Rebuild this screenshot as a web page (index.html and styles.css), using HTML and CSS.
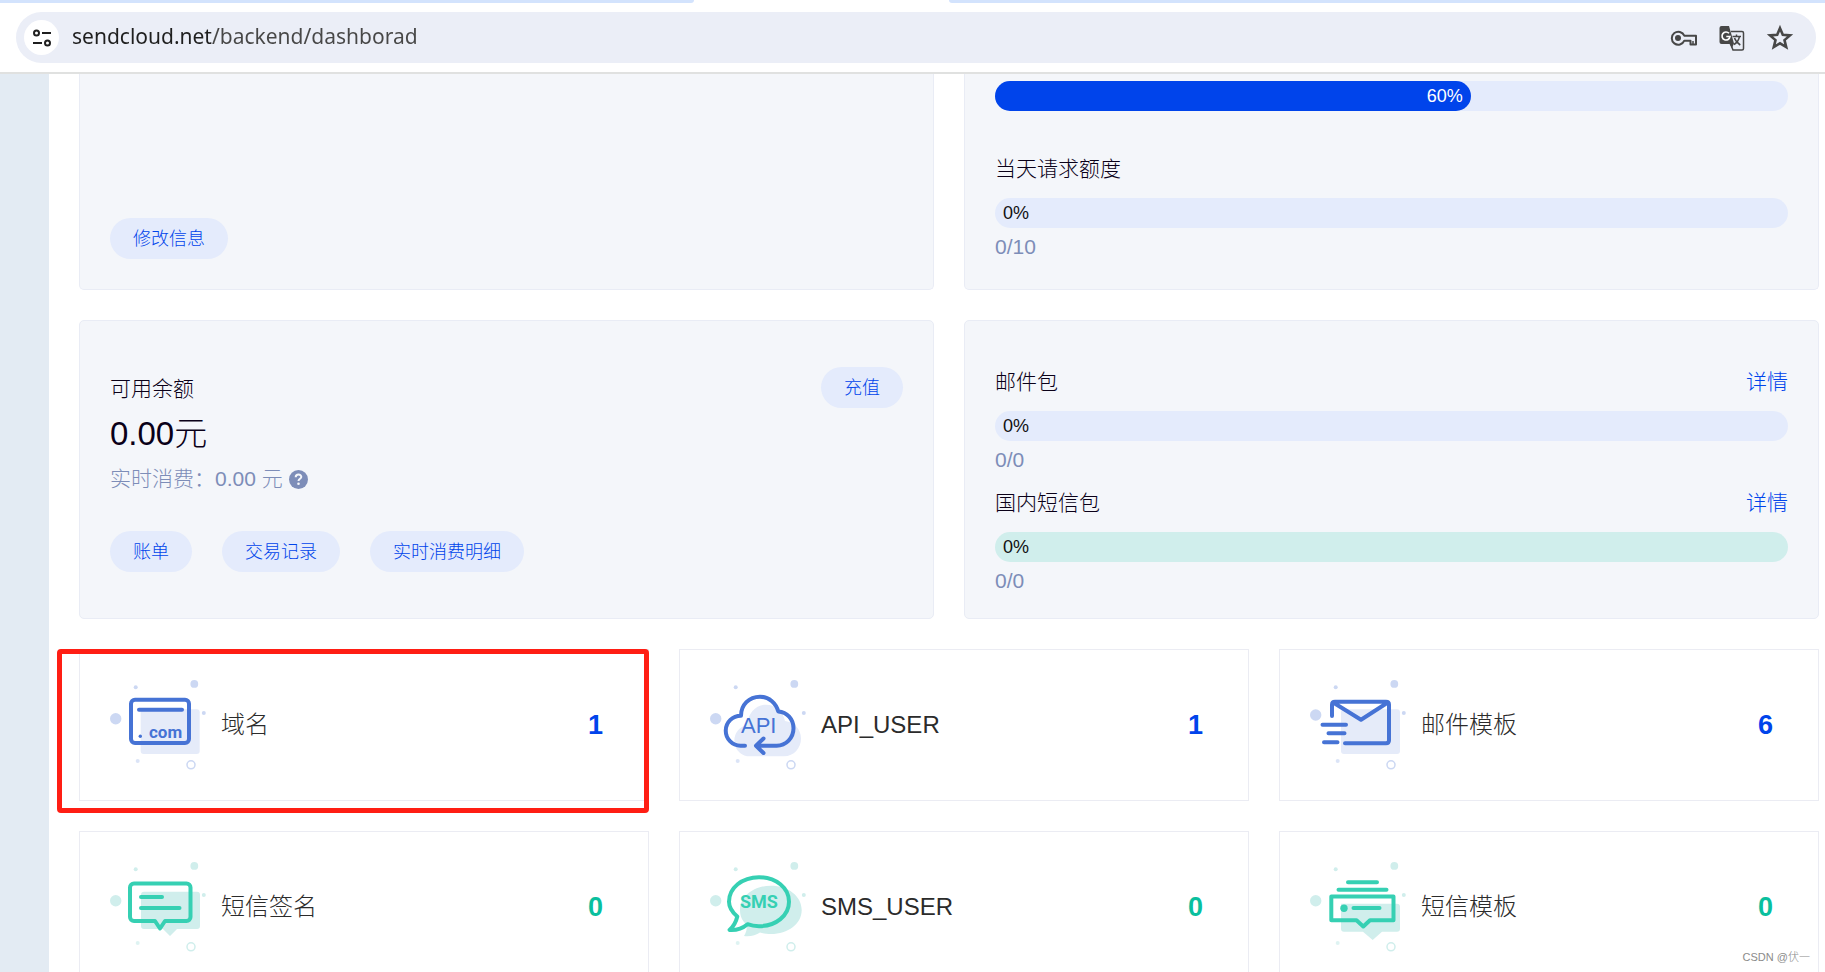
FILE: index.html
```html
<!DOCTYPE html>
<html lang="zh-CN">
<head>
  <meta charset="utf-8">
  <title>SendCloud</title>
  <link rel="stylesheet" href="styles.css">
</head>
<body>
  <div class="tabs">
    <div class="tabs-left"></div>
    <div class="tab-active"></div>
    <div class="tabs-right"></div>
  </div>

  <div class="toolbar">
    <div class="address">
      <button class="site-info" aria-label="Site information">
        <svg width="20" height="20" viewBox="0 0 20 20" fill="none" stroke="#1f1f1f" stroke-width="2">
          <circle cx="4.500" cy="5" r="2.500"/>
          <path d="M10 5h9M1 15h9"/>
          <circle cx="15.500" cy="15" r="2.500"/>
        </svg>
      </button>
      <input class="url" type="text" aria-label="Address" value="sendcloud.net/backend/dashborad">
      <button class="tool" aria-label="Passwords">
        <svg width="28" height="28" viewBox="0 0 28 28" fill="none" stroke="#474747" stroke-width="2">
          <path d="M14.300 11.700H26V20.500H20.500V16.700H14.300A6.500 6.500 0 1 1 14.300 11.700Z" stroke-linejoin="round"/>
          <circle cx="8" cy="14" r="3" fill="#474747" stroke="none"/>
          <path d="M23 17v3" stroke-width="1.500"/>
        </svg>
      </button>
      <button class="tool" aria-label="Translate">
        <svg width="28" height="28" viewBox="0 0 28 28">
          <path d="M13 7.500h11a1.500 1.500 0 0 1 1.500 1.500v15.500a1.500 1.500 0 0 1-1.500 1.500H15l-2-5" fill="none" stroke="#474747" stroke-width="1.500"/>
          <path d="M3.500 2H11l5 17.500-2 4.500-2.500-4H3.500A2 2 0 0 1 1.500 18V4a2 2 0 0 1 2-2Z" fill="#474747"/>
          <path d="M11 9.300a4 4 0 1 0 1 3.200H8.300" fill="none" stroke="#fff" stroke-width="1.700"/>
          <path d="M14.500 12.500h8.500M18.500 10.500v2M21.500 12.500c-.8 4-3 6.500-5.500 8M16.500 14c1 3 3.500 5.500 5.800 7" fill="none" stroke="#474747" stroke-width="1.500"/>
        </svg>
      </button>
      <button class="tool" aria-label="Bookmark">
        <svg width="28" height="28" viewBox="0 0 28 28">
          <path d="M14 4.200l2.800 6.600 7.200.6-5.500 4.700 1.700 7L14 19.300l-6.200 3.800 1.700-7L4 11.400l7.200-.6Z" fill="none" stroke="#474747" stroke-width="2.600"/>
        </svg>
      </button>
    </div>
  </div>

  <div class="page">
    <div class="sidebar"></div>
    <main class="content">
      <div class="panels">
        <section class="panel panel-cut account">
          <button class="btn">修改信息</button>
        </section>

        <section class="panel panel-cut">
          <div class="bar"><div class="bar-fill" style="width: 60%">60%</div></div>
          <div class="quota quota-day">
            <div class="quota-head"><span>当天请求额度</span></div>
            <div class="bar"><span class="bar-text">0%</span></div>
            <div class="quota-count">0/10</div>
          </div>
        </section>

        <section class="panel balance">
          <div class="balance-head">
            <div>
              <div class="balance-title">可用余额</div>
              <div class="balance-amount">0.00元</div>
            </div>
            <button class="btn">充值</button>
          </div>
          <div class="spend">
            实时消费：0.00 元
            <svg width="19" height="19" viewBox="0 0 19 19">
              <circle cx="9.500" cy="9.500" r="9.500" fill="#7d8db8"/>
              <path d="M6.700 7.300c0-3.800 5.800-3.500 5.600-.3-.1 1.800-2.800 1.900-2.800 4" fill="none" stroke="#f4f6fa" stroke-width="2"/>
              <circle cx="9.500" cy="13.700" r="1.300" fill="#f4f6fa"/>
            </svg>
          </div>
          <div class="actions">
            <button class="btn">账单</button>
            <button class="btn">交易记录</button>
            <button class="btn">实时消费明细</button>
          </div>
        </section>

        <section class="panel packages">
          <div class="quota">
            <div class="quota-head"><span>邮件包</span><a href="#">详情</a></div>
            <div class="bar"><span class="bar-text">0%</span></div>
            <div class="quota-count">0/0</div>
          </div>
          <div class="quota">
            <div class="quota-head"><span>国内短信包</span><a href="#">详情</a></div>
            <div class="bar bar-green"><span class="bar-text">0%</span></div>
            <div class="quota-count">0/0</div>
          </div>
        </section>
      </div>

      <svg class="defs" width="0" height="0">
        <symbol id="dots" viewBox="0 0 96 90">
          <circle cx="25.700" cy="7.300" r="2"/>
          <circle cx="84.300" cy="3.900" r="3.900"/>
          <circle cx="93.800" cy="33" r="2"/>
          <circle cx="27.700" cy="81" r="2" opacity=".7"/>
          <circle cx="81" cy="84.800" r="4" fill="none" stroke="currentColor" stroke-width="1.500"/>
        </symbol>
      </svg>

      <div class="stats">
        <a class="stat marked" href="#">
          <svg class="icon blue" width="96" height="90" viewBox="0 0 96 90">
            <use href="#dots" class="dots"/>
            <circle class="dots" cx="5.700" cy="38.800" r="5.700"/>
            <rect class="shade" x="30.700" y="29.300" width="59" height="44.700" rx="3"/>
            <rect class="line" x="21" y="19.700" width="58" height="43.300" rx="4"/>
            <path class="line" d="M29 29.700H72"/>
            <circle class="solid" cx="30.300" cy="56.300" r="1.700"/>
            <text class="com" x="39" y="58">com</text>
          </svg>
          <span class="stat-name">域名</span>
          <span class="stat-value">1</span>
        </a>

        <a class="stat" href="#">
          <svg class="icon blue" width="96" height="90" viewBox="0 0 96 90">
            <use href="#dots" class="dots"/>
            <circle class="dots" cx="5.700" cy="38.800" r="5.700"/>
            <path class="shade" d="M37 76.300A16 16 0 0 1 37 45C38 33 46 24.700 56 24.700C66 24.700 73 31 75 41C84 42 91 49 91 58.500C91 68 84 76.300 74 76.300Z"/>
            <path class="line" d="M35 65.700H30.500A15 15 0 0 1 31 35.700C31 25 39 16.700 50 16.700C59 16.700 66 23 68.300 31.500C77 32 83.500 39 83.500 48.300C83.500 58 76 65.700 66.700 65.700H46M53.500 58.500L46 65.700L53.500 73"/>
            <text class="api" x="31" y="53">API</text>
          </svg>
          <span class="stat-name">API_USER</span>
          <span class="stat-value">1</span>
        </a>

        <a class="stat" href="#">
          <svg class="icon blue" width="96" height="90" viewBox="0 0 96 90">
            <use href="#dots" class="dots"/>
            <circle class="dots" cx="5.700" cy="35" r="5.700"/>
            <rect class="shade" x="31" y="29.300" width="59" height="44.700" rx="3"/>
            <path class="line" d="M22 36V24.700q0-3 3-3H76q3 0 3 3V60.300q0 3-3 3H35M24 23L51 39.700L77 23M12.500 44.700H36M18.500 53.300H34.500M14 62.300H27.500"/>
          </svg>
          <span class="stat-name">邮件模板</span>
          <span class="stat-value">6</span>
        </a>

        <a class="stat stat-green" href="#">
          <svg class="icon green" width="96" height="90" viewBox="0 0 96 90">
            <use href="#dots" class="dots"/>
            <circle class="dots" cx="5.700" cy="38.800" r="5.700"/>
            <path class="shade" d="M34 29.700H87a3 3 0 0 1 3 3V64a3 3 0 0 1-3 3H67L60 74L53 67H34a3 3 0 0 1-3-3V32.700a3 3 0 0 1 3-3Z"/>
            <path class="line" d="M24 21.500H76.500a4 4 0 0 1 4 4V55a4 4 0 0 1-4 4H55L50 66.500L45 59H24a4 4 0 0 1-4-4V25.500a4 4 0 0 1 4-4ZM31 35H52M31 46H69.500"/>
          </svg>
          <span class="stat-name">短信签名</span>
          <span class="stat-value">0</span>
        </a>

        <a class="stat stat-green" href="#">
          <svg class="icon green" width="96" height="90" viewBox="0 0 96 90">
            <use href="#dots" class="dots"/>
            <circle class="dots" cx="5.700" cy="38.800" r="5.700"/>
            <path class="shade" d="M37 63C32 59 30 54 30 48C30 34 44 23.700 61 23.700S91.700 34 91.700 48S78 72 61 72C57 72 53 71.500 50 70.500C46 73 40 75 34 74C36 71 37 67 37 63Z"/>
            <path class="line" d="M27.300 54.500C22 50 19 45 19 39.700C19 26 32 15.200 49 15.200S79 26 79 39.700S66 64.200 49 64.200C45 64.200 41 63.500 37.500 62.200C33 66 27 68.500 19.500 68C23 65 26 60 27.300 54.500Z"/>
            <text class="sms" x="30" y="46">SMS</text>
          </svg>
          <span class="stat-name">SMS_USER</span>
          <span class="stat-value">0</span>
        </a>

        <a class="stat stat-green" href="#">
          <svg class="icon green" width="96" height="90" viewBox="0 0 96 90">
            <use href="#dots" class="dots"/>
            <circle class="dots" cx="5.700" cy="38.800" r="5.700"/>
            <path class="shade" d="M31 41.700H87a3 3 0 0 1 3 3V66.700a3 3 0 0 1-3 3H72L62.700 78L53 69.700H34a3 3 0 0 1-3-3Z"/>
            <path class="line" d="M21.300 34.500H83.500V58.300H60L53.300 64.500L46.500 58.300H21.300ZM38 20.300H67M28.500 27.700H76.500M43.500 46H69.500"/>
            <circle class="solid" cx="34" cy="46.300" r="3.700"/>
          </svg>
          <span class="stat-name">短信模板</span>
          <span class="stat-value">0</span>
        </a>
      </div>
    </main>
  </div>

  <div class="watermark">CSDN @伏一</div>
</body>
</html>
```

FILE: styles.css
```css
* {
  box-sizing: border-box;
}

body {
  margin: 0;
  height: 100vh;
  display: flex;
  flex-direction: column;
  overflow: hidden;
  position: relative;
  background: #fff;
  color: #0a0018;
  font-family: "Liberation Sans", "Noto Sans CJK SC", sans-serif;
  font-size: 21px;
  font-weight: 300;
  line-height: 30px;
}

button {
  border: 0;
  padding: 0;
  font: inherit;
  cursor: pointer;
}

a {
  color: #0044eb;
  text-decoration: none;
}

/* browser bar */

.tabs {
  display: flex;
  flex: none;
  height: 3px;
}

.tabs-left {
  width: 38%;
  background: #d3e3fd;
  border-bottom-right-radius: 3px;
}

.tab-active {
  width: 14%;
}

.tabs-right {
  flex: 1;
  background: #d3e3fd;
  border-bottom-left-radius: 3px;
}

.toolbar {
  flex: none;
  padding: 9px 9px 9px 16px;
  border-bottom: 2px solid #e0e1e0;
}

.address {
  display: flex;
  align-items: center;
  height: 51px;
  padding: 0 22px 0 8px;
  border-radius: 26px;
  background: #ebeef7;
}

.site-info {
  display: flex;
  align-items: center;
  justify-content: center;
  width: 35px;
  height: 35px;
  border-radius: 50%;
  background: #fff;
}

.url {
  flex: 1;
  margin-left: 13px;
  padding: 0 0 3px;
  border: 0;
  outline: 0;
  /* the host is darker than the path */
  background: linear-gradient(to right, #1f1f1f 140px, #474747 140px);
  -webkit-background-clip: text;
  background-clip: text;
  -webkit-text-fill-color: transparent;
  font-family: "Noto Sans", "Open Sans", sans-serif;
  font-size: 21px;
  font-weight: 400;
}

.tool {
  display: flex;
  margin-left: 20px;
  background: none;
}

/* page */

.page {
  display: flex;
  flex: 1;
  min-height: 0;
}

.sidebar {
  width: 49px;
  background: #e3ebf3;
}

.content {
  flex: 1;
  padding: 0 6px 0 30px;
}

.panels {
  display: grid;
  grid-template-columns: 1fr 1fr;
  gap: 30px;
}

.panel {
  padding: 46px 30px 22px;
  border: 1px solid #e9ecf5;
  border-radius: 5px;
  background: #f4f6fa;
}

.panel-cut {
  padding-top: 7px;
  padding-bottom: 27px;
  border-top: 0;
  border-radius: 0 0 5px 5px;
}

.account {
  display: flex;
  align-items: flex-end;
  padding-bottom: 30px;
}

.btn {
  height: 41px;
  padding: 0 23px;
  border-radius: 21px;
  background: #e4ebfc;
  color: #0044eb;
  font-size: 18px;
}

.bar {
  height: 30px;
  border-radius: 15px;
  background: #e4ebfc;
  color: #111;
  font-size: 18px;
}

.bar-text {
  padding-left: 8px;
}

.bar-fill {
  height: 30px;
  padding-right: 8px;
  border-radius: 15px;
  background: #0044eb;
  color: #fff;
  text-align: right;
}

.bar-green {
  background: #d0eeec;
}

.quota-day {
  margin-top: 43px;
}

.quota + .quota {
  margin-top: 13px;
}

.quota-head {
  display: flex;
  justify-content: space-between;
  margin-bottom: 14px;
}

.quota-count {
  margin-top: 4px;
  color: #7d8db8;
}

.balance-head {
  display: flex;
  justify-content: space-between;
}

.balance-title {
  margin-top: 7px;
}

.balance-amount {
  margin-top: 8px;
  font-size: 33px;
  line-height: 44px;
}

.spend {
  display: flex;
  align-items: center;
  gap: 6px;
  margin-top: 8px;
  color: #7d8db8;
}

.actions {
  display: flex;
  gap: 30px;
  margin-top: 37px;
}

.defs {
  display: block;
}

.stats {
  display: grid;
  grid-template-columns: 19fr 19fr 18fr;
  gap: 30px;
  margin-top: 30px;
}

.stat {
  display: flex;
  align-items: center;
  position: relative;
  padding: 30px 45px 30px 30px;
  border: 1px solid #ebecf3;
  color: #2b2b2b;
  font-size: 24px;
}

.stat-name {
  margin-left: 15px;
}

.stat-value {
  margin-left: auto;
  color: #0044eb;
  font-size: 27px;
  font-weight: bold;
}

.stat-green .stat-value {
  color: #0abf9e;
}

.marked::after {
  content: "";
  position: absolute;
  top: -1px;
  right: -1px;
  bottom: -13px;
  left: -23px;
  border: 5px solid #ff1e14;
  border-radius: 4px;
}

/* stat icons */

.line {
  fill: none;
  stroke-width: 4;
  stroke-linecap: round;
  stroke-linejoin: round;
}

.dots {
  fill: currentColor;
}

.blue {
  color: #ccd8f3;
}

.blue .line {
  stroke: #4673d5;
}

.blue .solid,
.blue text {
  fill: #4673d5;
}

.blue .shade {
  fill: #e5ebf9;
}

.green {
  color: #d0eeec;
}

.green .line {
  stroke: #36d0b3;
}

.green .solid,
.green text {
  fill: #36d0b3;
}

.green .shade {
  fill: #d0eeec;
}

.com,
.sms {
  font-family: Roboto, "Liberation Sans", sans-serif;
  font-size: 17px;
  font-weight: bold;
}

.sms {
  font-size: 18px;
}

.api {
  font-size: 22px;
}

.watermark {
  position: absolute;
  right: 15px;
  bottom: 5px;
  color: #8b8b8b;
  font-size: 11px;
  line-height: 20px;
}
```
